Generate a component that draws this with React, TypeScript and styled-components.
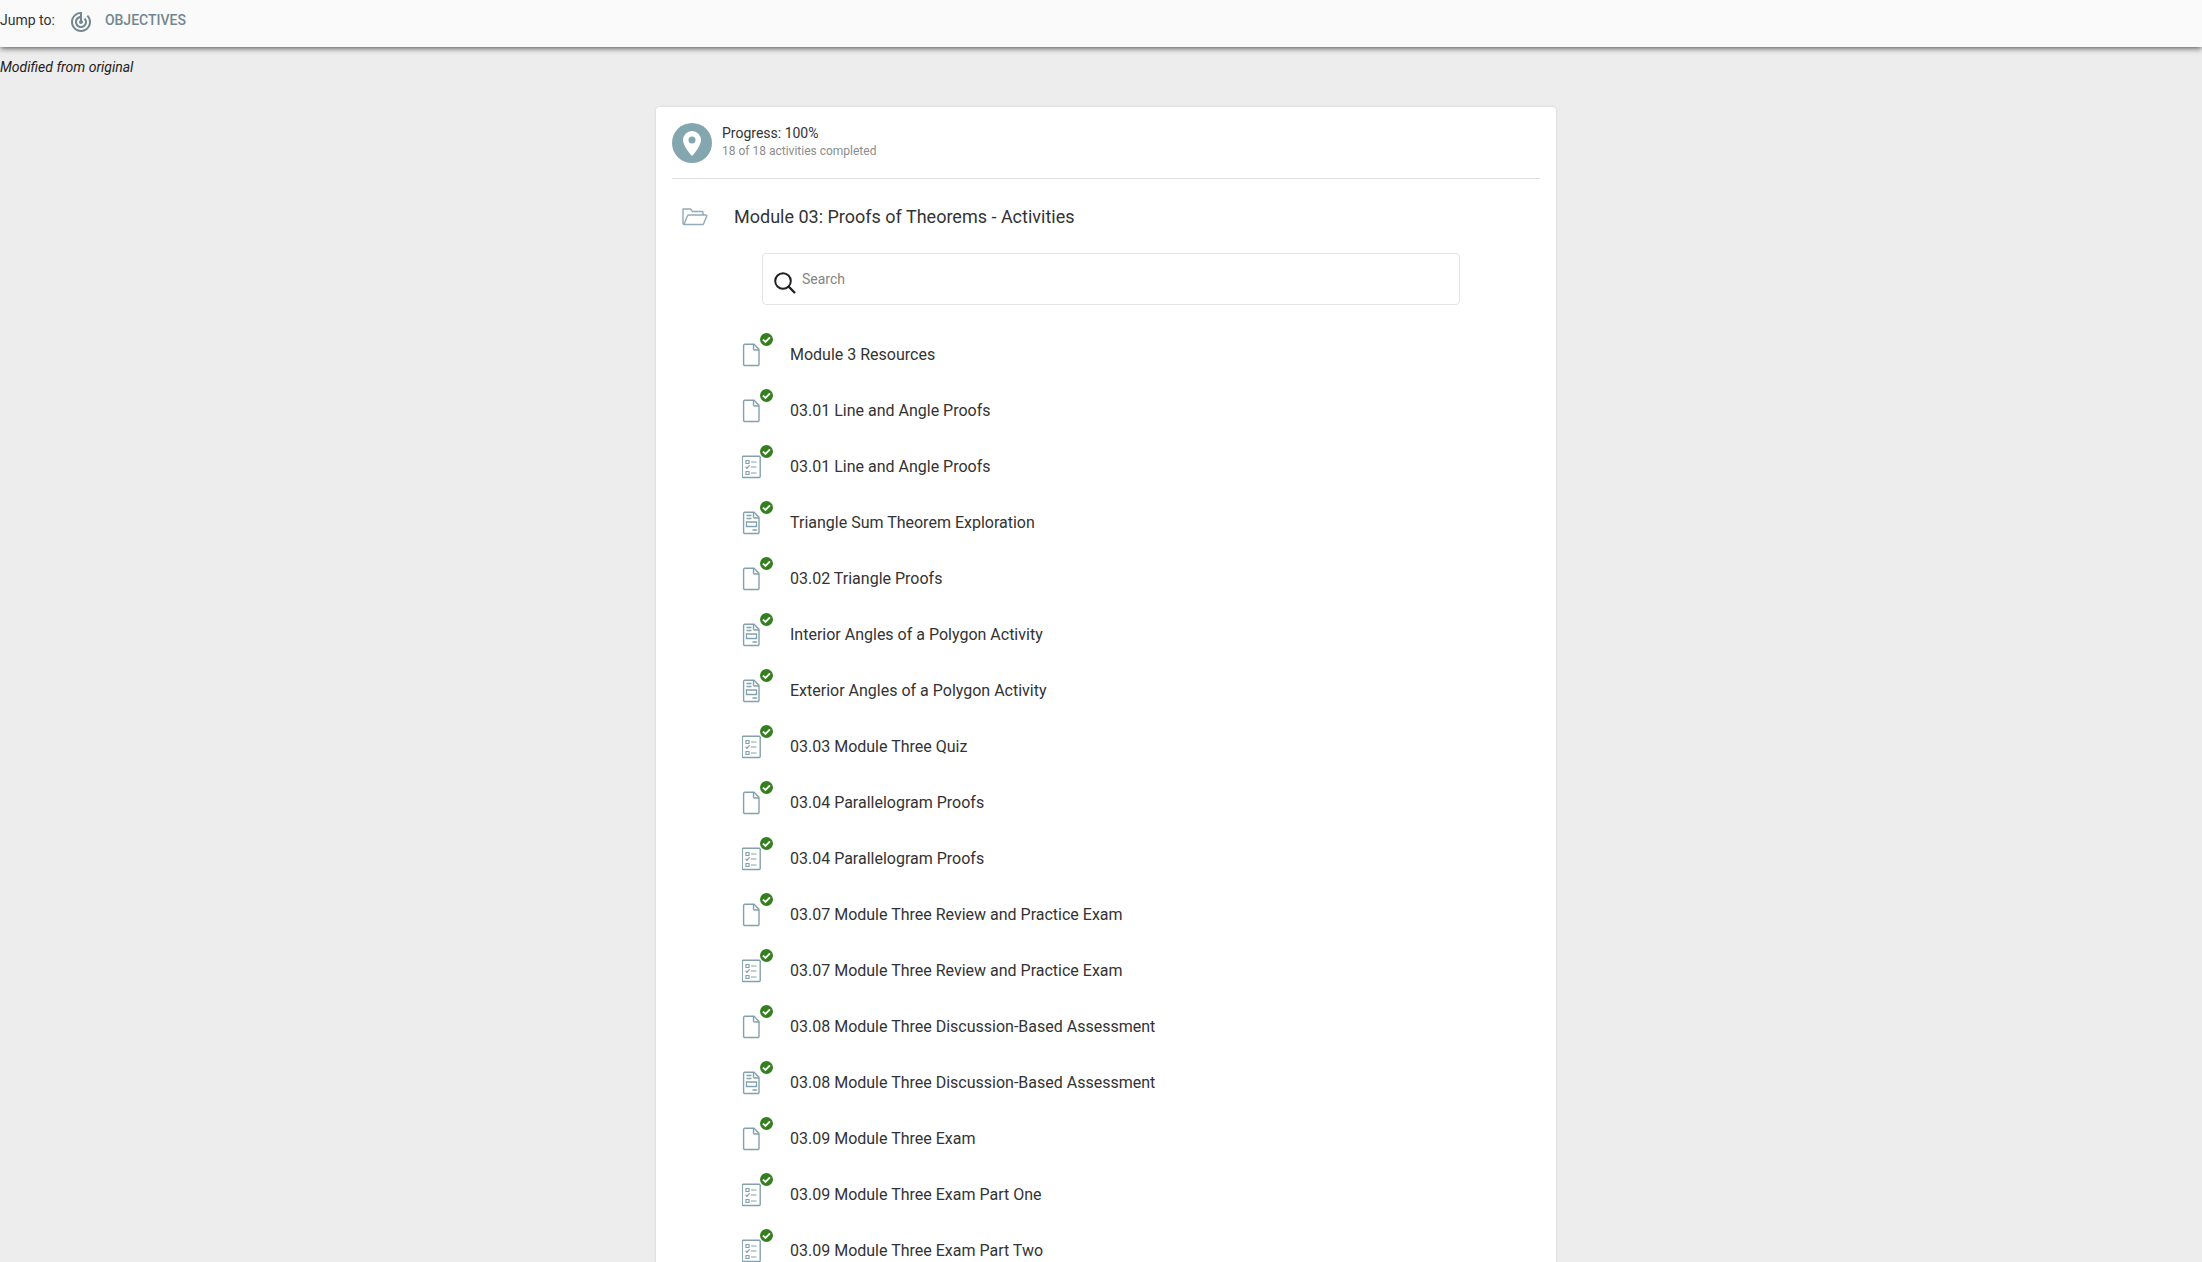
import React from 'react';
import styled, { createGlobalStyle } from 'styled-components';
import { MdTrackChanges } from 'react-icons/md';

const GlobalStyle = createGlobalStyle`
  * { box-sizing: border-box; }
  body {
    margin: 0;
    background: #ededed;
    color: #333;
    font-family: Roboto, "Liberation Sans", sans-serif;
    font-size: 14px;
    line-height: 20px;
  }
`;

const Page = styled.div`
  height: 100vh;
  overflow: hidden;
`;

const TopBar = styled.header`
  display: flex;
  height: 47px;
  padding-top: 10px;
  background: #fafafa;
  box-shadow: 0 1px 6px rgba(0, 0, 0, 0.7);
`;

const JumpNav = styled.nav`
  display: flex;
  align-items: flex-start;
  gap: 14px;
`;

const JumpLink = styled.a`
  display: flex;
  gap: 12px;
  color: #728791;
  font-weight: 500;
  text-decoration: none;
`;

const Note = styled.p`
  margin: 0;
  padding-top: 10px;
  color: #222;
  font-style: italic;
`;

const Main = styled.main`
  display: flex;
  justify-content: center;
  padding: 30px 0 0 10px;
`;

const Card = styled.section`
  width: 100%;
  max-width: 900px;
  padding: 16px;
  border-radius: 4px;
  background: #fff;
  box-shadow: 0 0 3px rgba(0, 0, 0, 0.12);
`;

const Progress = styled.div`
  display: flex;
  gap: 10px;
  padding-bottom: 15px;
  border-bottom: 1px solid #e0e0e0;
`;

const ProgressText = styled.div`
  display: flex;
  flex-direction: column;
  color: #333;
`;

const ProgressDetail = styled.span`
  color: #8c8c8c;
  font-size: 12px;
  line-height: 16px;
`;

const ModuleHeader = styled.div`
  display: flex;
  align-items: center;
  gap: 26px;
  padding: 26px 10px 24px;
`;

const ModuleTitle = styled.h1`
  margin: 0;
  font-size: 18px;
  font-weight: 400;
  line-height: 24px;
`;

const SearchBox = styled.label`
  display: flex;
  align-items: center;
  gap: 6px;
  height: 52px;
  margin: 0 80px 22px 90px;
  padding: 0 11px;
  border: 1px solid #e4e4e4;
  border-radius: 4px;

  svg { margin-top: 8px; flex: none; }
`;

const SearchInput = styled.input`
  flex: 1;
  height: 50px;
  padding: 0;
  border: 0;
  outline: 0;
  background: transparent;
  color: #333;
  font: inherit;

  &::placeholder { color: #858585; opacity: 1; }
`;

const ActivityList = styled.ul`
  margin: 0;
  padding: 0 0 0 70px;
  list-style: none;
`;

const ActivityItem = styled.li`
  display: flex;
  align-items: center;
  height: 56px;
`;

const ActivityIcon = styled.span`
  position: relative;
  display: flex;
  width: 48px;
`;

const DoneBadge = styled.svg`
  position: absolute;
  top: -10px;
  left: 18px;
`;

const ActivityLink = styled.a`
  color: #333;
  font-size: 16px;
  line-height: 24px;
  text-decoration: none;
`;

type Kind = 'page' | 'quiz' | 'task';

const activities: { kind: Kind; title: string }[] = [
  { kind: 'page', title: 'Module 3 Resources' },
  { kind: 'page', title: '03.01 Line and Angle Proofs' },
  { kind: 'quiz', title: '03.01 Line and Angle Proofs' },
  { kind: 'task', title: 'Triangle Sum Theorem Exploration' },
  { kind: 'page', title: '03.02 Triangle Proofs' },
  { kind: 'task', title: 'Interior Angles of a Polygon Activity' },
  { kind: 'task', title: 'Exterior Angles of a Polygon Activity' },
  { kind: 'quiz', title: '03.03 Module Three Quiz' },
  { kind: 'page', title: '03.04 Parallelogram Proofs' },
  { kind: 'quiz', title: '03.04 Parallelogram Proofs' },
  { kind: 'page', title: '03.07 Module Three Review and Practice Exam' },
  { kind: 'quiz', title: '03.07 Module Three Review and Practice Exam' },
  { kind: 'page', title: '03.08 Module Three Discussion-Based Assessment' },
  { kind: 'task', title: '03.08 Module Three Discussion-Based Assessment' },
  { kind: 'page', title: '03.09 Module Three Exam' },
  { kind: 'quiz', title: '03.09 Module Three Exam Part One' },
  { kind: 'quiz', title: '03.09 Module Three Exam Part Two' },
];

function KindIcon({ kind }: { kind: Kind }) {
  return (
    <svg width="20" height="24" viewBox="0 0 20 24" fill="none" stroke="#84a1ac" strokeWidth="1.4" aria-hidden="true">
      {kind === 'quiz' ? (
        <>
          <rect x="0.2" y="1.3" width="18" height="21.2" rx="1" />
          <path d="M4 5.5h3v3H4zM4 16.500h3v3H4zM3.500 11.800l1.500 1.500 2.600-3M9 7h5.500M9 12h5.500M9 18h5.500" strokeWidth="1.200" />
        </>
      ) : (
        <>
          <path d="M2.800 1.300h9.200l5 5v15a1.200 1.200 0 0 1-1.200 1.200h-13a1.200 1.200 0 0 1-1.200-1.200v-18.800a1.200 1.200 0 0 1 1.200-1.200z" />
          <path d="M11.500 1.500v4.300a1.200 1.200 0 0 0 1.200 1.200h4.300" />
          {kind === 'task' && <path d="M4.500 4.500h5M4.500 7.500h5M4.500 11h10v4.500h-10zM10.500 19h4.500" strokeWidth="1.300" />}
        </>
      )}
    </svg>
  );
}

function Badge() {
  return (
    <DoneBadge width="13" height="13" viewBox="0 0 13 13" role="img" aria-label="Completed">
      <circle cx="6.5" cy="6.5" r="6.5" fill="#34801f" />
      <path d="M3 6.600l2.400 2.300 4.600-4.500" fill="none" stroke="#fff" strokeWidth="1.800" />
    </DoneBadge>
  );
}

export default function App() {
  return (
    <Page>
      <GlobalStyle />
      <TopBar>
        <JumpNav aria-label="Jump to">
          <span>Jump to:</span>
          <JumpLink href="#objectives">
            <MdTrackChanges size={24} aria-hidden="true" />
            OBJECTIVES
          </JumpLink>
        </JumpNav>
      </TopBar>
      <Note>Modified from original</Note>
      <Main>
        <Card>
          <Progress>
            <svg width="40" height="40" viewBox="0 0 40 40" aria-hidden="true">
              <circle cx="20" cy="20" r="20" fill="#84a6af" />
              <path d="M20 8a9 9 0 0 0-9 9c0 6.5 9 16 9 16s9-9.500 9-16a9 9 0 0 0-9-9z" fill="#fff" />
              <circle cx="20" cy="17" r="3.5" fill="#84a6af" />
            </svg>
            <ProgressText>
              <span>Progress: 100%</span>
              <ProgressDetail>18 of 18 activities completed</ProgressDetail>
            </ProgressText>
          </Progress>
          <ModuleHeader>
            <svg width="26" height="18" viewBox="0 0 26 18" fill="none" stroke="#94aab6" strokeWidth="1.4" strokeLinejoin="round" aria-hidden="true">
              <path d="M2 16.500c-.7 0-1-.5-1-1.200V1h7.500l2 2.500H20a1 1 0 0 1 1 1V7M2 16.500l3.200-8.300Q5.700 7 7 7h16.800q1.400 0 .8 1.400l-2.900 7.200q-.4.900-1.500.9z" />
            </svg>
            <ModuleTitle>Module 03: Proofs of Theorems - Activities</ModuleTitle>
          </ModuleHeader>
          <SearchBox>
            <svg width="22" height="22" viewBox="0 0 22 22" fill="none" stroke="#222" strokeWidth="2" aria-hidden="true">
              <circle cx="9" cy="9" r="7.800" />
              <path d="M14.500 14.500L21 21" strokeWidth="2.400" />
            </svg>
            <SearchInput type="text" placeholder="Search" aria-label="Search" />
          </SearchBox>
          <ActivityList>
            {activities.map((activity, index) => (
              <ActivityItem key={index}>
                <ActivityIcon>
                  <KindIcon kind={activity.kind} />
                  <Badge />
                </ActivityIcon>
                <ActivityLink href="#activity">{activity.title}</ActivityLink>
              </ActivityItem>
            ))}
          </ActivityList>
        </Card>
      </Main>
    </Page>
  );
}
